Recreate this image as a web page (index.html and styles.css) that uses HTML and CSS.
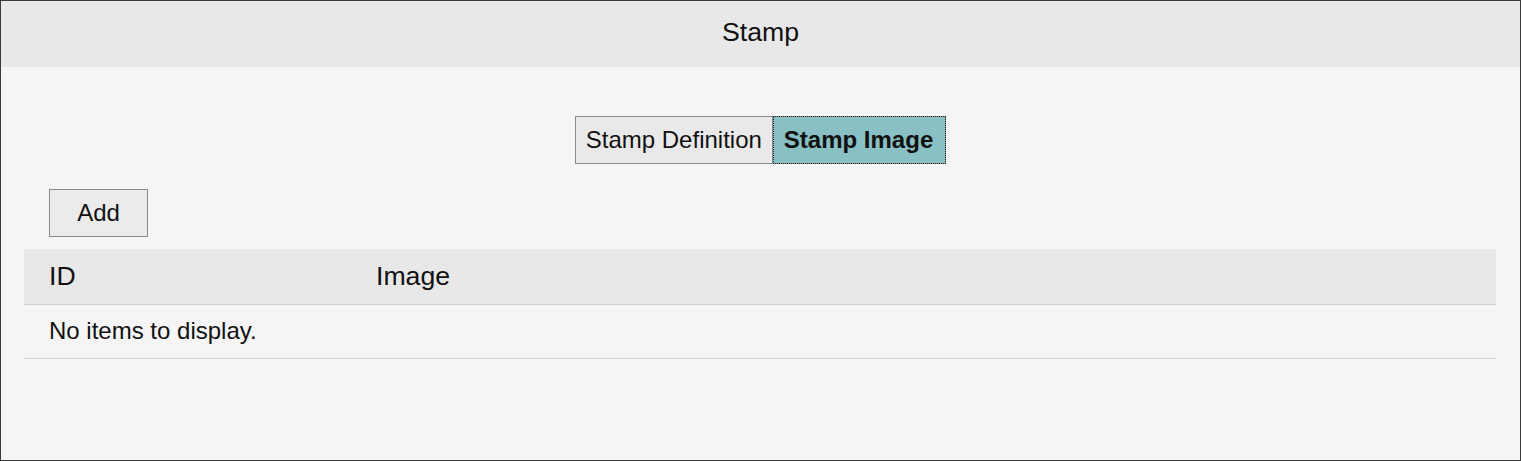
FILE: index.html
```html
<!DOCTYPE html>
<html lang="en">
<head>
<meta charset="utf-8">
<title>Stamp</title>
<link rel="stylesheet" href="styles.css">
</head>
<body>
<div class="frame">
  <header class="titlebar">Stamp</header>
  <main class="content">
    <div class="tabs">
      <button class="tab">Stamp Definition</button>
      <button class="tab tab-active">Stamp Image</button>
    </div>
    <div class="toolbar">
      <button class="btn">Add</button>
    </div>
    <table class="grid">
      <thead>
        <tr><th class="col-id">ID</th><th>Image</th></tr>
      </thead>
      <tbody>
        <tr><td colspan="2">No items to display.</td></tr>
      </tbody>
    </table>
  </main>
</div>
</body>
</html>
```

FILE: styles.css
```css
* { box-sizing: border-box; }
html, body { margin: 0; padding: 0; }
body {
  font-family: "Liberation Sans", Arial, sans-serif;
  color: #111;
  background: #f5f5f5;
}
.frame {
  width: 1521px;
  height: 461px;
  border: 1px solid #3a3a3a;
  background: #f5f5f5;
  display: flex;
  flex-direction: column;
}
.titlebar {
  height: 66px;
  background: #e8e8e8;
  text-align: center;
  font-size: 26.67px;
  line-height: 30px;
  padding-top: 16px;
  color: #111;
}
.content {
  padding: 49px 24px 0 23px;
}
.tabs {
  display: flex;
  justify-content: center;
  padding-left: 1px;
}
.tab {
  font-family: inherit;
  font-size: 24px;
  color: #111;
  height: 48px;
  padding: 0 10px;
  background: #e9e9e9;
  border: 1px solid #8a8a8a;
  margin: 0;
  cursor: pointer;
}
.tab + .tab { border-left: none; }
.tab-active {
  background: #88c0c4;
  font-weight: bold;
  padding: 0 12px 0 11px;
  outline: 1px dotted #222;
  outline-offset: -1px;
}
.toolbar {
  padding: 25px 0 12px 25px;
}
.btn {
  font-family: inherit;
  font-size: 24px;
  color: #111;
  width: 99px;
  height: 48px;
  background: #ebebeb;
  border: 1px solid #8a8a8a;
  padding: 0;
  display: block;
}
.grid {
  width: 100%;
  border-collapse: collapse;
}
.grid th {
  background: #e8e8e8;
  font-weight: normal;
  font-size: 26.67px;
  text-align: left;
  height: 55px;
  padding: 0 0 0 25px;
  border-bottom: 1px solid #cfcfcf;
  vertical-align: middle;
}
.grid th.col-id { width: 327px; }
.grid td {
  font-size: 24px;
  height: 54px;
  padding: 0 0 0 25px;
  border-bottom: 1px solid #d2d2d2;
  vertical-align: middle;
}
```
